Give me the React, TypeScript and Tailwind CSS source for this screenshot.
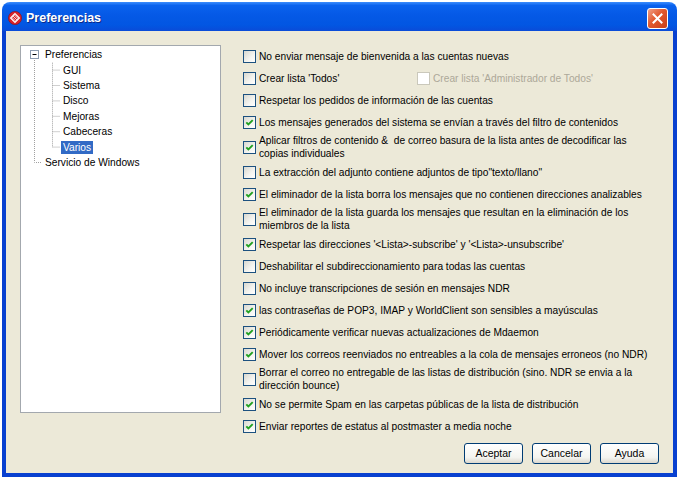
import React from 'react'

type Item = { lines: string[]; checked: boolean; extra?: string }

const items: Item[] = [
  { lines: ['No enviar mensaje de bienvenida a las cuentas nuevas'], checked: false },
  { lines: ["Crear lista 'Todos'"], checked: false, extra: "Crear lista 'Administrador de Todos'" },
  { lines: ['Respetar los pedidos de información de las cuentas'], checked: false },
  { lines: ['Los mensajes generados del sistema se envían a través del filtro de contenidos'], checked: true },
  {
    lines: ['Aplicar filtros de contenido &  de correo basura de la lista antes de decodificar las', 'copias individuales'],
    checked: true,
  },
  { lines: ['La extracción del adjunto contiene adjuntos de tipo"texto/llano"'], checked: false },
  { lines: ['El eliminador de la lista borra los mensajes que no contienen direcciones analizables'], checked: true },
  {
    lines: ['El eliminador de la lista guarda los mensajes que resultan en la eliminación de los', 'miembros de la lista'],
    checked: false,
  },
  { lines: ["Respetar las direcciones '<Lista>-subscribe' y '<Lista>-unsubscribe'"], checked: true },
  { lines: ['Deshabilitar el subdireccionamiento para todas las cuentas'], checked: false },
  { lines: ['No incluye transcripciones de sesión en mensajes NDR'], checked: false },
  { lines: ['las contraseñas de POP3, IMAP y WorldClient son sensibles a mayúsculas'], checked: true },
  { lines: ['Periódicamente verificar nuevas actualizaciones de Mdaemon'], checked: true },
  { lines: ['Mover los correos reenviados no entreables a la cola de mensajes erroneos (no NDR)'], checked: true },
  {
    lines: ['Borrar el correo no entregable de las listas de distribución (sino. NDR se envia a la', 'dirección bounce)'],
    checked: false,
  },
  { lines: ['No se permite Spam en las carpetas públicas de la lista de distribución'], checked: true },
  { lines: ['Enviar reportes de estatus al postmaster a media noche'], checked: true },
]

const treeRows = [
  { label: 'Preferencias', child: false },
  { label: 'GUI', child: true },
  { label: 'Sistema', child: true },
  { label: 'Disco', child: true },
  { label: 'Mejoras', child: true },
  { label: 'Cabeceras', child: true },
  { label: 'Varios', child: true, selected: true },
  { label: 'Servicio de Windows', child: false },
]

const rowY = (i: number) => 1 + 7.7 + 15.4 * i

function CheckBox({ checked, disabled }: { checked: boolean; disabled?: boolean }) {
  return (
    <span
      className={
        disabled
          ? 'w-[13px] h-[13px] shrink-0 border border-[#cac8bb] bg-white'
          : 'w-[13px] h-[13px] shrink-0 border border-[#1c5180] bg-[linear-gradient(135deg,#d8d8d0,#f4f4f0_60%,#ffffff)] flex items-center justify-center'
      }
    >
      {checked && (
        <svg width="9" height="9" viewBox="0 0 9 9">
          <path d="M1.3 4.3 L3.4 6.5 L7.7 2.1" fill="none" stroke="#21a121" strokeWidth="1.9" />
        </svg>
      )}
    </span>
  )
}

function TitleIcon() {
  return (
    <svg width="14" height="14" viewBox="0 0 14 14">
      <circle cx="7" cy="7" r="6.6" fill="#d9232b" stroke="#8c0d12" strokeWidth="0.6" />
      <path d="M7 2.6 L11.4 7 L7 11.4 L2.6 7 Z" fill="none" stroke="#fff" strokeWidth="1.2" />
      <path d="M4.8 4.8 L9.2 9.2 M6 3.6 L10.4 8 M3.6 6 L8 10.4" stroke="#fff" strokeWidth="0.8" />
    </svg>
  )
}

function CloseButton() {
  return (
    <div className="w-[21px] h-[21px] rounded-[3px] border border-white bg-[linear-gradient(135deg,#f0a088,#e2582e_45%,#c8401a)] flex items-center justify-center">
      <svg width="11" height="11" viewBox="0 0 11 11">
        <path d="M1.5 1.5 L9.5 9.5 M9.5 1.5 L1.5 9.5" stroke="#fff" strokeWidth="2" strokeLinecap="square" />
      </svg>
    </div>
  )
}

function XpButton({ label }: { label: string }) {
  return (
    <button className="w-[59px] h-[21px] rounded-[3px] border border-[#003c74] bg-[linear-gradient(to_bottom,#ffffff,#f4f4f0_70%,#dcd8ce)] text-[10.5px] text-black leading-none">
      {label}
    </button>
  )
}

function Tree() {
  return (
    <div className="w-[201px] h-[368px] shrink-0 border border-[#a3a8ae] bg-white relative">
      <svg className="absolute left-0 top-0" width="199" height="366">
        <g stroke="#a0a0a0" strokeDasharray="1 1" fill="none">
          <path d={`M13.5 14 V${rowY(7)} H21`} />
          <path d={`M31.5 ${rowY(0) + 8} V${rowY(6)}`} />
          {[1, 2, 3, 4, 5, 6].map((i) => (
            <path key={i} d={`M31.5 ${rowY(i)} H39`} />
          ))}
        </g>
        <rect x="9.5" y="4.5" width="8" height="8" fill="#fff" stroke="#8b9bb0" />
        <path d="M11.5 8.5 H15.5" stroke="#000" />
      </svg>
      <div className="relative flex flex-col pt-[1px] text-[10.2px] text-black">
        {treeRows.map((r) => (
          <div key={r.label} className={r.child ? 'h-[15.4px] flex items-center pl-[40px]' : 'h-[15.4px] flex items-center pl-[22px]'}>
            {r.selected ? (
              <span className="bg-[#316ac5] text-white px-[2px] leading-[13px]">{r.label}</span>
            ) : (
              <span className="px-[2px] leading-[13px]">{r.label}</span>
            )}
          </div>
        ))}
      </div>
    </div>
  )
}

export default function App() {
  return (
    <div className="w-[680px] h-[479px] bg-white pl-[2px] pt-[2px] font-['Liberation_Sans',Arial,sans-serif]">
      <div className="w-[675px] h-[475px] flex flex-col rounded-t-[8px] overflow-hidden">
        <div className="h-[29px] shrink-0 flex items-center pt-[3px] pl-[6px] pr-[9px] bg-[linear-gradient(to_bottom,#3c8dfd,#0a62ee_12%,#0559e6_45%,#0256e2_80%,#0a4bd8)]">
          <TitleIcon />
          <span className="ml-[4px] text-white font-bold text-[12.5px] [text-shadow:1px_1px_#0b2a8a]">Preferencias</span>
          <div className="ml-auto">
            <CloseButton />
          </div>
        </div>

        <div className="flex-1 flex border-x-[4px] border-b-[4px] border-[#0840d0] bg-[#ece9d8] pl-[14px] pt-[14px] pr-[14px] pb-[9px]">
          <Tree />

          <div className="ml-[22px] flex-1 flex flex-col">
            <div className="flex flex-col text-[10.2px] text-black">
              {items.map((it, i) => (
                <div key={i} className={it.lines.length > 1 ? 'h-[28px] flex items-center' : 'h-[22px] flex items-center'}>
                  {it.extra ? (
                    <>
                      <div className="w-[174px] flex items-center">
                        <CheckBox checked={it.checked} />
                        <span className="ml-[3px] leading-[13px]">{it.lines[0]}</span>
                      </div>
                      <CheckBox checked={false} disabled />
                      <span className="ml-[3px] leading-[13px] text-[#aca899]">{it.extra}</span>
                    </>
                  ) : (
                    <>
                      <CheckBox checked={it.checked} />
                      <span className="ml-[3px] leading-[13px]">
                        {it.lines.map((l, j) => (
                          <span key={j} className="block whitespace-pre">
                            {l}
                          </span>
                        ))}
                      </span>
                    </>
                  )}
                </div>
              ))}
            </div>

            <div className="mt-auto flex justify-end gap-[9px]">
              <XpButton label="Aceptar" />
              <XpButton label="Cancelar" />
              <XpButton label="Ayuda" />
            </div>
          </div>
        </div>
      </div>
    </div>
  )
}
